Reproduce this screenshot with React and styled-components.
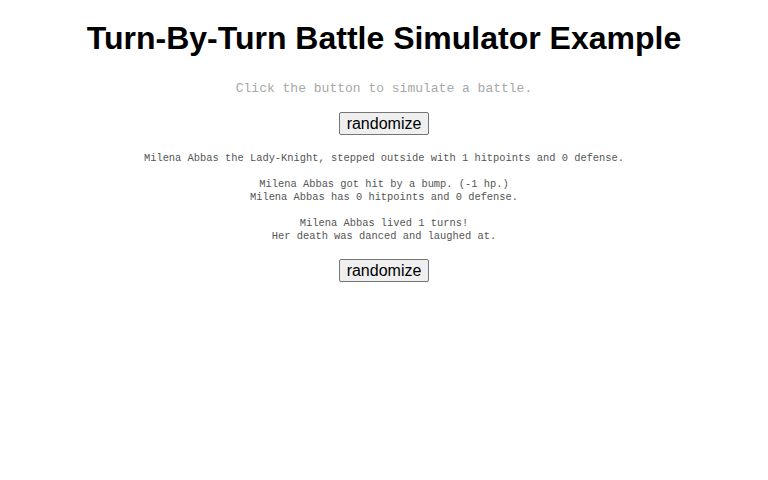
import React from 'react';
import styled, { createGlobalStyle } from 'styled-components';

const GlobalStyle = createGlobalStyle`
  body {
    margin: 0;
    background: #fff;
    font-family: "Liberation Sans", Arial, sans-serif;
  }
`;

const Page = styled.div`
  display: flex;
  flex-direction: column;
  align-items: center;
  padding-top: 20px;
`;

const Title = styled.h1`
  margin: 0;
  font-size: 32px;
  line-height: 37px;
  font-weight: bold;
  color: #000;
`;

const Hint = styled.p`
  margin: 24px 0 0;
  font-family: "Liberation Mono", "Courier New", monospace;
  font-size: 13px;
  line-height: 15px;
  color: #a8a8a8;
`;

const RandomButton = styled.button`
  margin-top: ${p => p.$top}px;
  font-family: "Liberation Sans", Arial, sans-serif;
  font-size: 16px;
  line-height: 19px;
  padding: 1px 7px;
  color: #000;
  background: #efefef;
  border: 1px solid #767676;
  border-radius: 2px;
`;

const Log = styled.pre`
  margin: 17px 0 0;
  font-family: "Liberation Mono", "Courier New", monospace;
  font-size: 10.4px;
  line-height: 13px;
  color: #555;
  text-align: center;
  white-space: pre-wrap;
`;

const battleLog = [
  'Milena Abbas the Lady-Knight, stepped outside with 1 hitpoints and 0 defense.',
  '',
  'Milena Abbas got hit by a bump. (-1 hp.)',
  'Milena Abbas has 0 hitpoints and 0 defense.',
  '',
  'Milena Abbas lived 1 turns!',
  'Her death was danced and laughed at.',
].join('\n');

export default function App() {
  return (
    <>
      <GlobalStyle />
      <Page>
        <Title>Turn-By-Turn Battle Simulator Example</Title>
        <Hint>Click the button to simulate a battle.</Hint>
        <RandomButton $top={16}>randomize</RandomButton>
        <Log>{battleLog}</Log>
        <RandomButton $top={16}>randomize</RandomButton>
      </Page>
    </>
  );
}
